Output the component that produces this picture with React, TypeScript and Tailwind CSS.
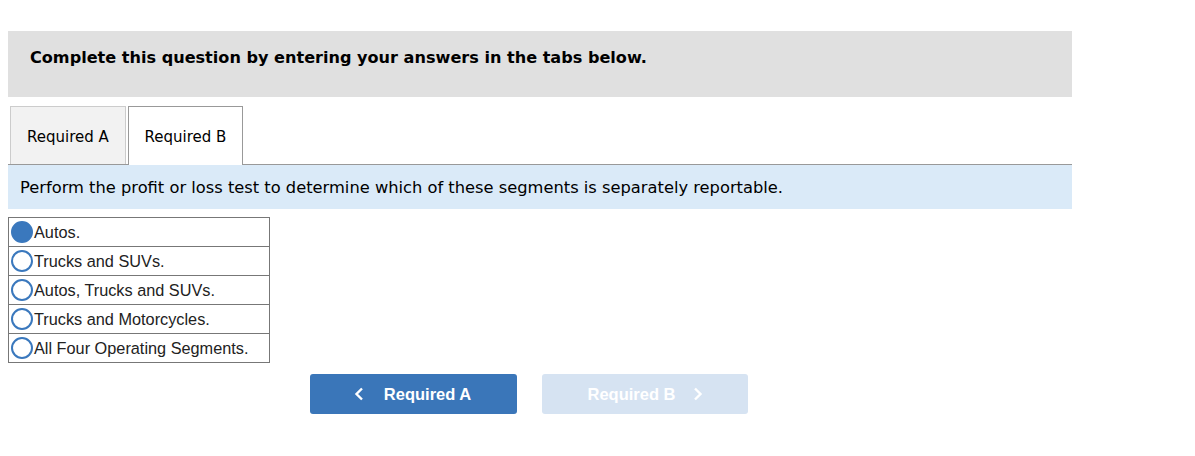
import { useState } from 'react'

const options = [
  'Autos.',
  'Trucks and SUVs.',
  'Autos, Trucks and SUVs.',
  'Trucks and Motorcycles.',
  'All Four Operating Segments.',
]

export default function App() {
  const [selected, setSelected] = useState(0)
  const [tab, setTab] = useState<'A' | 'B'>('B')

  return (
    <div className="w-[1195px] h-[456px] bg-white pt-[31px] pl-[8px]">
      <div className="w-[1064px]">
        <div className="h-[66px] bg-[#e0e0e0] pl-[22px] pt-[17px]">
          <p className="font-['Verdana','DejaVu_Sans',sans-serif] font-bold text-[16.1px] leading-[20px] text-black">
            Complete this question by entering your answers in the tabs below.
          </p>
        </div>

        <div className="mt-[9px] flex items-end h-[59px] border-b border-[#999] pl-[2px] gap-[2px]">
          <button
            onClick={() => setTab('A')}
            className={`w-[116px] border border-b-0 pt-[3px] text-[15px] text-black font-['Verdana','DejaVu_Sans',sans-serif] ${tab === 'A' ? 'bg-white border-[#999] h-[59px] -mb-px' : 'bg-[#f2f2f2] border-[#ccc] h-[58px]'}`}
          >
            Required A
          </button>
          <button
            onClick={() => setTab('B')}
            className={`w-[115px] border border-b-0 pt-[3px] text-[15px] text-black font-['Verdana','DejaVu_Sans',sans-serif] ${tab === 'B' ? 'bg-white border-[#999] h-[59px] -mb-px' : 'bg-[#f2f2f2] border-[#ccc] h-[58px]'}`}
          >
            Required B
          </button>
        </div>

        <div className="h-[44px] bg-[#daeaf8] pl-[12px] pt-[2px] flex items-center">
          <p className="font-['Verdana','DejaVu_Sans',sans-serif] text-[16.3px] text-black">
            Perform the profit or loss test to determine which of these segments is separately reportable.
          </p>
        </div>

        <div className="mt-[8px] w-[262px] border border-[#777]">
          {options.map((opt, i) => (
            <label
              key={opt}
              onClick={() => setSelected(i)}
              className={`flex items-center pl-[2px] cursor-pointer ${i > 0 ? 'h-[29px] border-t border-[#777]' : 'h-[28px]'}`}
            >
              <span
                className={`w-[22px] h-[22px] rounded-full border-[2px] border-[#3a78bd] shrink-0 ${selected === i ? 'bg-[#3a78bd]' : 'bg-white'}`}
              />
              <span className="ml-[1px] font-['Liberation_Sans',Arial,sans-serif] text-[16.3px] text-[#222] leading-none">{opt}</span>
            </label>
          ))}
        </div>

        <div className="mt-[11px] ml-[302px] flex gap-[25px]">
          <button className="w-[207px] h-[40px] rounded-[3px] bg-[#3a76b9] text-white font-['Liberation_Sans',Arial,sans-serif] font-bold text-[16.5px] flex items-center justify-center gap-[20px] pr-[2px]">
            <svg width="10" height="14" viewBox="0 0 10 14" fill="none">
              <path d="M8 1.5 L2.5 7 L8 12.5" stroke="white" strokeWidth="2.4" />
            </svg>
            <span>Required A</span>
          </button>
          <button className="w-[206px] h-[40px] rounded-[3px] bg-[#d6e3f2] text-white font-['Liberation_Sans',Arial,sans-serif] font-bold text-[16.5px] flex items-center justify-center gap-[17px]">
            <span>Required B</span>
            <svg width="10" height="14" viewBox="0 0 10 14" fill="none">
              <path d="M2 1.5 L7.5 7 L2 12.5" stroke="white" strokeWidth="2.4" />
            </svg>
          </button>
        </div>
      </div>
    </div>
  )
}
